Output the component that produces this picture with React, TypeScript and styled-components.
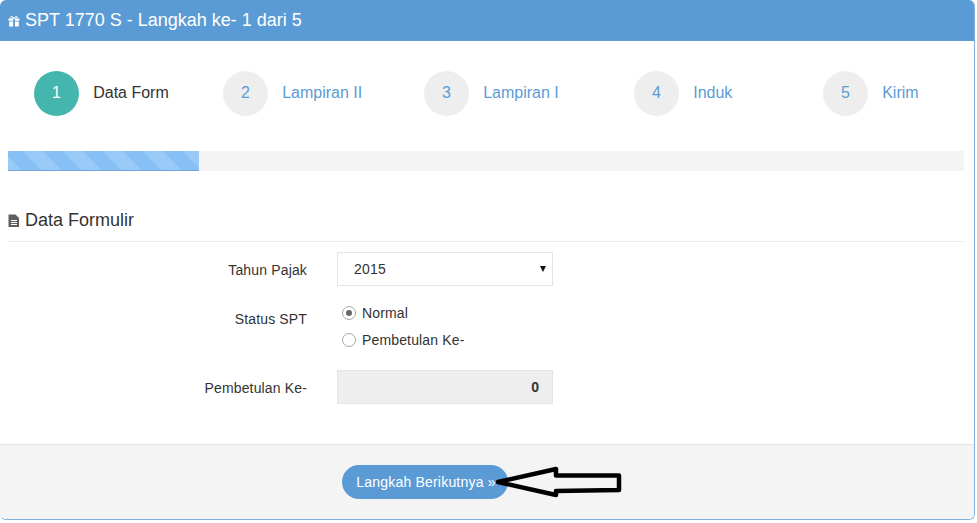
import { FC } from "react";
import styled, { createGlobalStyle } from "styled-components";

const GlobalStyle = createGlobalStyle`
  html, body {
    margin: 0;
    padding: 0;
    background: #fff;
    overflow: hidden;
  }
  * {
    box-sizing: border-box;
  }
`;

const Panel = styled.div`
  position: relative;
  width: 975px;
  height: 520px;
  display: flex;
  flex-direction: column;
  border: 1px solid #7fb0dc;
  border-top: 0;
  border-left: 0;
  border-radius: 6px;
  overflow: hidden;
  font-family: "Liberation Sans", Arial, sans-serif;
  color: #333;
`;

const Header = styled.div`
  height: 41px;
  display: flex;
  align-items: center;
  gap: 5px;
  padding-left: 8px;
  background: #5b9bd5;
  color: #fff;
  font-size: 18px;
`;

const Body = styled.div`
  flex: 1;
  padding: 30px 10px 0 8px;
`;

const Steps = styled.div`
  display: grid;
  grid-template-columns: 189px 201px 210px 189px 1fr;
  padding-left: 26px;
`;

const Step = styled.div`
  display: flex;
  align-items: center;
  gap: 14.2px;
`;

const Circle = styled.span<{ $active: boolean }>`
  width: 45px;
  height: 45px;
  display: flex;
  align-items: center;
  justify-content: center;
  padding-bottom: 2px;
  border-radius: 50%;
  font-size: 16px;
  background: ${({ $active }) => ($active ? "#44b6ae" : "#eeeeee")};
  color: ${({ $active }) => ($active ? "#fff" : "#5b9bd5")};
`;

const StepLabel = styled.span<{ $active: boolean }>`
  padding-bottom: 2px;
  font-size: 16px;
  color: ${({ $active }) => ($active ? "#333" : "#5b9bd5")};
`;

const Progress = styled.div`
  height: 20px;
  margin-top: 35px;
  background: #f4f4f4;
`;

const ProgressBar = styled.div`
  height: 100%;
  background-color: #87c0f5;
  background-image: linear-gradient(
    45deg,
    rgba(255, 255, 255, 0.15) 25%,
    transparent 25%,
    transparent 50%,
    rgba(255, 255, 255, 0.15) 50%,
    rgba(255, 255, 255, 0.15) 75%,
    transparent 75%
  );
  background-size: 40px 40px;
  background-position: 15px 0;
  border-bottom: 1px solid #6fa5dc;
`;

const SectionTitle = styled.h3`
  display: flex;
  align-items: center;
  gap: 5px;
  height: 43px;
  margin: 28px 0 0;
  border-bottom: 1px solid #eeeeee;
  font-size: 18px;
  font-weight: 400;
  color: #333;
`;

const Form = styled.div`
  display: flex;
  flex-direction: column;
  margin-top: 10px;
`;

const Row = styled.div<{ $gap: number }>`
  display: grid;
  grid-template-columns: 299px 216px;
  column-gap: 30px;
  margin-bottom: ${({ $gap }) => $gap}px;
`;

const Label = styled.label<{ $top: number }>`
  padding-top: ${({ $top }) => $top}px;
  text-align: right;
  font-size: 14px;
  letter-spacing: 0.15px;
  color: #333;
`;

const SelectBox = styled.div`
  height: 34px;
  display: flex;
  align-items: center;
  justify-content: space-between;
  padding: 0 6px 0 16px;
  border: 1px solid #e5e5e5;
  font-size: 14px;
  color: #333;
  letter-spacing: 0.2px;
`;

const Caret = styled.span`
  width: 0;
  height: 0;
  border-left: 3.5px solid transparent;
  border-right: 3.5px solid transparent;
  border-top: 6px solid #111;
`;

const RadioList = styled.div`
  display: flex;
  flex-direction: column;
  gap: 9px;
  padding: 8px 0 0 5px;
`;

const RadioRow = styled.div`
  display: flex;
  align-items: center;
  gap: 6px;
  height: 18px;
  font-size: 14px;
  letter-spacing: 0.15px;
  color: #333;
`;

const Radio = styled.span<{ $checked: boolean }>`
  width: 14px;
  height: 14px;
  display: flex;
  align-items: center;
  justify-content: center;
  border: 1px solid #a6a6a6;
  border-radius: 50%;
  background: #fff;

  &::after {
    content: "";
    display: ${({ $checked }) => ($checked ? "block" : "none")};
    width: 6px;
    height: 6px;
    border-radius: 50%;
    background: #666;
  }
`;

const ReadonlyInput = styled.div`
  height: 34px;
  display: flex;
  align-items: center;
  justify-content: flex-end;
  padding-right: 13px;
  border: 1px solid #e5e5e5;
  background: #eeeeee;
  font-size: 14px;
  font-weight: 700;
  color: #333;
`;

const Footer = styled.div`
  height: 75px;
  display: flex;
  justify-content: center;
  padding: 20px 125px 0 0;
  border-top: 1px solid #e5e5e5;
  background: #f4f4f4;
`;

const NextButton = styled.button`
  width: 166px;
  height: 34px;
  border: 0;
  border-radius: 17px;
  background: #5b9bd5;
  color: #fff;
  font-family: inherit;
  font-size: 14px;
  letter-spacing: 0.2px;
  padding: 0 0 0 3px;
`;

const ArrowMark = styled.svg`
  position: absolute;
  left: 490px;
  top: 460px;
`;

const steps = ["Data Form", "Lampiran II", "Lampiran I", "Induk", "Kirim"];

const GiftIcon: FC = () => (
  <svg width="12" height="12" viewBox="0 0 12 12" fill="#fff">
    <path d="M0.5 3.5h4.6v2.2H0.5zM6.9 3.5h4.6v2.2H6.9zM1.2 6.5h3.9v5H1.2zM6.9 6.5h3.9v5H6.9z" />
    <path
      d="M5.8 3.3C4.6 1 3 .9 2.7 2c-.2 1 1.4 1.3 3.1 1.3zM6.2 3.3C7.4 1 9 .9 9.3 2c.2 1-1.4 1.3-3.1 1.3z"
      fill="none"
      stroke="#fff"
      strokeWidth="1"
    />
  </svg>
);

const FileIcon: FC = () => (
  <svg width="12" height="13" viewBox="0 0 12 13">
    <path d="M0.5 0.5h7l3.5 3.5V13H0.5z" fill="#5f5f5f" />
    <path d="M3 6.5h6M3 8.5h6M3 10.5h6" stroke="#fff" strokeWidth="1" />
  </svg>
);

const App: FC = () => (
  <>
    <GlobalStyle />
    <Panel>
      <Header>
        <GiftIcon />
        <span>SPT 1770 S - Langkah ke- 1 dari 5</span>
      </Header>
      <Body>
        <Steps>
          {steps.map((title, index) => (
            <Step key={title}>
              <Circle $active={index === 0}>{index + 1}</Circle>
              <StepLabel $active={index === 0}>{title}</StepLabel>
            </Step>
          ))}
        </Steps>
        <Progress>
          <ProgressBar style={{ width: `${(191 / 956) * 100}%` }} />
        </Progress>
        <SectionTitle>
          <FileIcon />
          Data Formulir
        </SectionTitle>
        <Form>
          <Row $gap={10}>
            <Label $top={10}>Tahun Pajak</Label>
            <SelectBox>
              2015
              <Caret />
            </SelectBox>
          </Row>
          <Row $gap={21}>
            <Label $top={15}>Status SPT</Label>
            <RadioList>
              <RadioRow>
                <Radio $checked />
                Normal
              </RadioRow>
              <RadioRow>
                <Radio $checked={false} />
                Pembetulan Ke-
              </RadioRow>
            </RadioList>
          </Row>
          <Row $gap={0}>
            <Label $top={10}>Pembetulan Ke-</Label>
            <ReadonlyInput>0</ReadonlyInput>
          </Row>
        </Form>
      </Body>
      <Footer>
        <NextButton type="button">Langkah Berikutnya »</NextButton>
      </Footer>
      <ArrowMark width="140" height="42" viewBox="0 0 140 42">
        <path
          d="M8 22 L66 9 L66 15.5 L129 15.5 L129 30 L66 31 L66 35 Z"
          fill="none"
          stroke="#000"
          strokeWidth="4.5"
          strokeLinejoin="round"
        />
      </ArrowMark>
    </Panel>
  </>
);

export default App;
